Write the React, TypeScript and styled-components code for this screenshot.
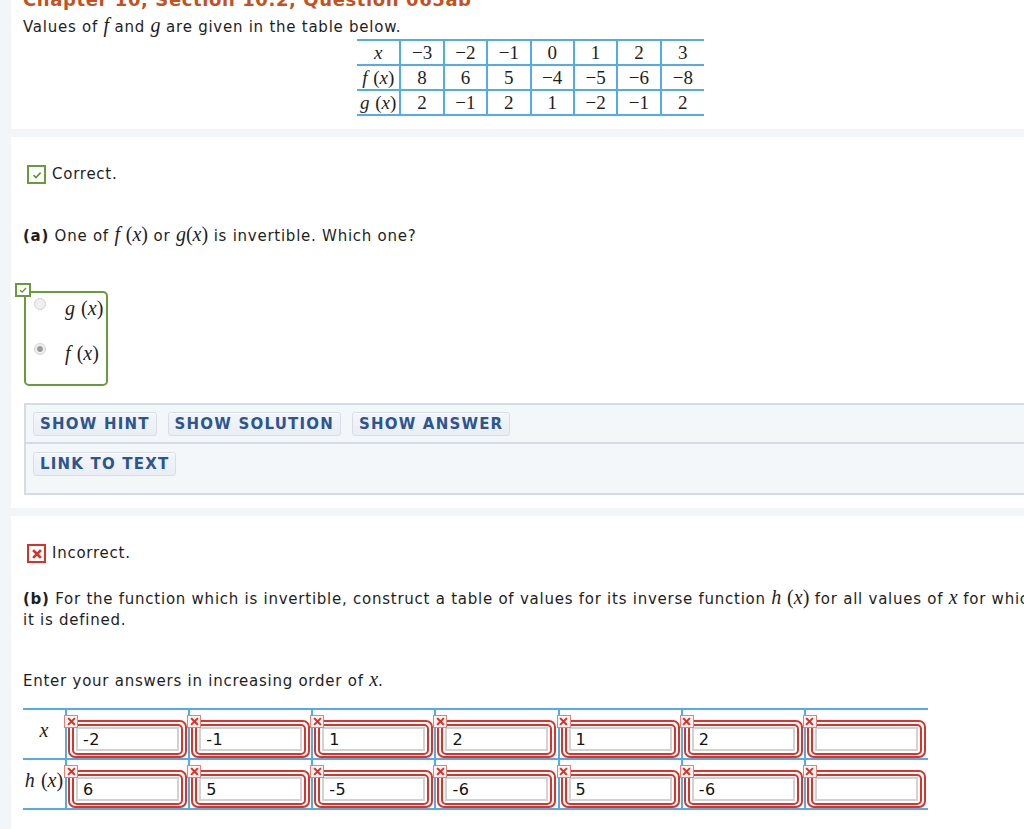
import React from 'react';
import styled, { createGlobalStyle } from 'styled-components';

const GlobalStyle = createGlobalStyle`
  html, body {
    margin: 0;
    padding: 0;
    background: #f3f6f9;
    overflow: hidden;
  }
  body {
    font-family: 'DejaVu Sans', Verdana, sans-serif;
    color: #1e1e1e;
  }
`;

const topX = ['−3', '−2', '−1', '0', '1', '2', '3'];
const topF = ['8', '6', '5', '−4', '−5', '−6', '−8'];
const topG = ['2', '−1', '2', '1', '−2', '−1', '2'];

const answerX = ['-2', '-1', '1', '2', '1', '2', ''];
const answerH = ['6', '5', '-5', '-6', '5', '-6', ''];

export default function App() {
  return (
    <>
      <GlobalStyle />
      <Page>
        <Panel pad="0 12px 13px">
          <Title>Chapter 10, Section 10.2, Question 065ab</Title>
          <Text>
            Values of <MathVar>f</MathVar> and <MathVar>g</MathVar> are given in the table below.
          </Text>
          <ValueTable>
            <tbody>
              <tr>
                <ValueHead>
                  <MathVar>x</MathVar>
                </ValueHead>
                {topX.map((v, i) => (
                  <ValueCell key={`x-${i}`}>{v}</ValueCell>
                ))}
              </tr>
              <tr>
                <ValueHead>
                  <Fn name="f" />
                </ValueHead>
                {topF.map((v, i) => (
                  <ValueCell key={`f-${i}`}>{v}</ValueCell>
                ))}
              </tr>
              <tr>
                <ValueHead>
                  <Fn name="g" />
                </ValueHead>
                {topG.map((v, i) => (
                  <ValueCell key={`g-${i}`}>{v}</ValueCell>
                ))}
              </tr>
            </tbody>
          </ValueTable>
        </Panel>

        <Panel pad="28px 12px 13px">
          <Status>
            <StatusIcon tone="ok">
              <CheckMark size={12} />
            </StatusIcon>
            Correct.
          </Status>
          <Question top={42}>
            <b>(a)</b> One of <Fn name="f" /> or <MathVar>g</MathVar>
            <MathParen>(</MathParen>
            <MathVar>x</MathVar>
            <MathParen>)</MathParen> is invertible. Which one?
          </Question>
          <ChoiceBox>
            <ChoiceTag>
              <CheckMark size={10} />
            </ChoiceTag>
            <ChoiceRow>
              <Radio />
              <ChoiceLabel>
                <Fn name="g" />
              </ChoiceLabel>
            </ChoiceRow>
            <ChoiceRow>
              <Radio checked />
              <ChoiceLabel>
                <Fn name="f" />
              </ChoiceLabel>
            </ChoiceRow>
          </ChoiceBox>
          <HelpBox>
            <HelpRow>
              <HelpButton>SHOW HINT</HelpButton>
              <HelpButton>SHOW SOLUTION</HelpButton>
              <HelpButton>SHOW ANSWER</HelpButton>
            </HelpRow>
            <HelpRow last>
              <HelpButton>LINK TO TEXT</HelpButton>
            </HelpRow>
          </HelpBox>
        </Panel>

        <Panel pad="28px 12px 30px">
          <Status>
            <StatusIcon tone="bad">
              <CrossMark size={10} width={2.6} />
            </StatusIcon>
            Incorrect.
          </Status>
          <Question top={26}>
            <Line>
              <b>(b)</b> For the function which is invertible, construct a table of values for its
              inverse function <Fn name="h" /> for all values of <MathVar>x</MathVar> for which
            </Line>
            <br />
            it is defined.
          </Question>
          <Question top={40}>
            Enter your answers in increasing order of <MathVar>x</MathVar>.
          </Question>
          <AnswerTable>
            <tbody>
              <tr>
                <AnswerHead>
                  <MathVar>x</MathVar>
                </AnswerHead>
                {answerX.map((v, i) => (
                  <AnswerCell key={`ax-${i}`}>
                    <AnswerField value={v} />
                  </AnswerCell>
                ))}
              </tr>
              <tr>
                <AnswerHead>
                  <Fn name="h" />
                </AnswerHead>
                {answerH.map((v, i) => (
                  <AnswerCell key={`ah-${i}`}>
                    <AnswerField value={v} />
                  </AnswerCell>
                ))}
              </tr>
            </tbody>
          </AnswerTable>
        </Panel>
      </Page>
    </>
  );
}

function Fn({ name }: { name: string }) {
  return (
    <MathGroup>
      <MathVar>{name}</MathVar> <MathParen>(</MathParen>
      <MathVar>x</MathVar>
      <MathParen>)</MathParen>
    </MathGroup>
  );
}

function CheckMark({ size }: { size: number }) {
  return (
    <svg width={size} height={size} viewBox="0 0 12 12">
      <polyline points="2.5,6.2 5,8.6 9.6,3.6" fill="none" stroke="#5f9334" strokeWidth="1.6" />
    </svg>
  );
}

function CrossMark({ size, width }: { size: number; width: number }) {
  return (
    <svg width={size} height={size} viewBox="0 0 10 10">
      <path d="M2 2 L8 8 M8 2 L2 8" stroke="#d6322b" strokeWidth={width} strokeLinecap="square" />
    </svg>
  );
}

function AnswerField({ value }: { value: string }) {
  return (
    <FieldWrap>
      <FieldBadge>
        <CrossMark size={9} width={2.2} />
      </FieldBadge>
      <FieldOuter>
        <FieldInner>
          <FieldInput defaultValue={value} />
        </FieldInner>
      </FieldOuter>
    </FieldWrap>
  );
}

const Page = styled.div`
  width: 1039px;
  padding-left: 11px;
  display: flex;
  flex-direction: column;
  gap: 8px;
  letter-spacing: 0.75px;
`;

const Panel = styled.section<{ pad: string }>`
  background: #ffffff;
  padding: ${({ pad }) => pad};
  display: flex;
  flex-direction: column;
  align-items: flex-start;
`;

const Title = styled.h1`
  margin: -10px 0 0;
  font-size: 18px;
  line-height: 20px;
  font-weight: bold;
  letter-spacing: 0.6px;
  color: #c4511f;
`;

const Text = styled.p`
  margin: 7px 0 0;
  font-size: 15px;
  line-height: 20px;
`;

const Line = styled.span`
  white-space: nowrap;
`;

const MathGroup = styled.span`
  white-space: nowrap;
  letter-spacing: 0;
  word-spacing: 1px;
`;

const MathVar = styled.i`
  font-family: 'Liberation Serif', 'Times New Roman', serif;
  font-size: 20px;
  line-height: 0;
  font-style: italic;
  letter-spacing: 0;
`;

const MathParen = styled.span`
  font-family: 'Liberation Serif', 'Times New Roman', serif;
  font-size: 20px;
  line-height: 0;
  letter-spacing: 0;
`;

const ValueTable = styled.table`
  margin: 2px auto 0;
  width: 347px;
  table-layout: fixed;
  border-collapse: collapse;
  font-family: 'Liberation Serif', 'Times New Roman', serif;
  font-size: 19px;
  letter-spacing: 0;
  tr {
    border-top: 2px solid #55abe4;
    border-bottom: 2px solid #55abe4;
  }
  i,
  span {
    font-size: 19px;
  }
`;

const ValueHead = styled.td`
  height: 23px;
  padding: 0;
  line-height: 23px;
  text-align: center;
  white-space: nowrap;
  border-right: 2px solid #55abe4;
`;

const ValueCell = styled.td`
  height: 23px;
  padding: 0;
  line-height: 23px;
  text-align: center;
  border-left: 2px solid #55abe4;
`;

const Status = styled.div`
  display: flex;
  align-items: center;
  gap: 6px;
  margin-left: 4px;
  font-size: 15px;
  line-height: 19px;
`;

const StatusIcon = styled.span<{ tone: 'ok' | 'bad' }>`
  width: 19px;
  height: 19px;
  box-sizing: border-box;
  display: inline-flex;
  align-items: center;
  justify-content: center;
  background: #fff;
  border: 2px solid ${({ tone }) => (tone === 'ok' ? '#6b9a3c' : '#d6322b')};
`;

const Question = styled.p<{ top: number }>`
  margin: ${({ top }) => top}px 0 0;
  font-size: 15px;
  line-height: 21px;
  b {
    font-weight: bold;
  }
`;

const ChoiceBox = styled.div`
  position: relative;
  margin: 44px 0 0 1px;
  width: 84px;
  height: 95px;
  box-sizing: border-box;
  border: 2px solid #6b9a3c;
  border-radius: 5px;
  padding: 0 8px;
  display: flex;
  flex-direction: column;
  gap: 25px;
`;

const ChoiceTag = styled.span`
  position: absolute;
  left: -11px;
  top: -10px;
  width: 16px;
  height: 14px;
  box-sizing: border-box;
  border: 2px solid #6b9a3c;
  background: #fff;
  display: flex;
  align-items: center;
  justify-content: center;
`;

const ChoiceRow = styled.div`
  height: 20px;
  display: flex;
  align-items: center;
  gap: 19px;
`;

const Radio = styled.span<{ checked?: boolean }>`
  flex: none;
  margin-top: 1px;
  width: 12px;
  height: 12px;
  box-sizing: border-box;
  border-radius: 50%;
  border: 1px solid #d3d3d3;
  background: ${({ checked }) =>
    checked ? 'radial-gradient(circle, #9b9b9b 0 2.6px, #eeeeee 3.2px)' : '#efefef'};
`;

const ChoiceLabel = styled.span`
  margin-top: 14px;
  line-height: 20px;
`;

const HelpBox = styled.div`
  margin: 17px 0 0 1px;
  width: 100%;
  box-sizing: border-box;
  background: #f4f7fa;
  border: 2px solid #d3dbe5;
  border-right: none;
  display: flex;
  flex-direction: column;
`;

const HelpRow = styled.div<{ last?: boolean }>`
  display: flex;
  gap: 11px;
  padding: ${({ last }) => (last ? '8px 7px 17px' : '7px 7px 6px')};
  border-bottom: ${({ last }) => (last ? 'none' : '2px solid #d3dbe5')};
`;

const HelpButton = styled.button`
  height: 24px;
  padding: 0 6px;
  border: 1px solid #d7dee7;
  border-radius: 3px;
  background: linear-gradient(#f3f6fa, #e9eef4);
  box-shadow: inset 0 1px 0 #fff;
  font-family: 'DejaVu Sans', Verdana, sans-serif;
  font-weight: bold;
  font-size: 15px;
  letter-spacing: 1.2px;
  color: #2d5591;
  cursor: pointer;
`;

const AnswerTable = styled.table`
  margin-top: 16px;
  width: 905px;
  table-layout: fixed;
  border-collapse: collapse;
  tr {
    border-top: 2px solid #55abe4;
    border-bottom: 2px solid #55abe4;
  }
`;

const AnswerHead = styled.td`
  width: 42px;
  padding: 10px 0 0;
  line-height: 24px;
  text-align: center;
  vertical-align: top;
  white-space: nowrap;
  border-right: 2px solid #55abe4;
`;

const AnswerCell = styled.td`
  padding: 10px 0 0 1px;
  vertical-align: top;
  border-left: 2px solid #55abe4;
`;

const FieldWrap = styled.div`
  position: relative;
  width: 119px;
`;

const FieldBadge = styled.span`
  position: absolute;
  left: -4px;
  top: -5px;
  width: 14px;
  height: 13px;
  box-sizing: border-box;
  border: 1.5px solid #e58079;
  background: #fff3f2;
  display: flex;
  align-items: center;
  justify-content: center;
  z-index: 1;
`;

const FieldOuter = styled.div`
  border: 2px solid #d8342c;
  border-radius: 7px;
  padding: 1.5px 2px;
  background: #fff;
`;

const FieldInner = styled.div`
  border: 2px solid #d8342c;
  border-radius: 5px;
  padding: 1.5px 2px;
  background: #fff;
`;

const FieldInput = styled.input`
  display: block;
  width: 100%;
  height: 24px;
  box-sizing: border-box;
  border: 2px solid #d2d2d2;
  padding: 0 5px;
  font-family: 'DejaVu Sans', Verdana, sans-serif;
  font-size: 16px;
  letter-spacing: 0.5px;
  color: #111;
  background: #fff;
  outline: none;
`;
